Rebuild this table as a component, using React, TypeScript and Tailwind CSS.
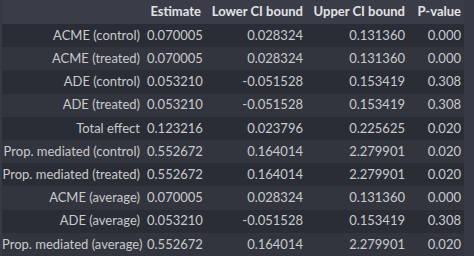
const columns = ['Estimate', 'Lower CI bound', 'Upper CI bound', 'P-value'];

const rows: [string, string, string, string, string][] = [
  ['ACME (control)', '0.070005', '0.028324', '0.131360', '0.000'],
  ['ACME (treated)', '0.070005', '0.028324', '0.131360', '0.000'],
  ['ADE (control)', '0.053210', '-0.051528', '0.153419', '0.308'],
  ['ADE (treated)', '0.053210', '-0.051528', '0.153419', '0.308'],
  ['Total effect', '0.123216', '0.023796', '0.225625', '0.020'],
  ['Prop. mediated (control)', '0.552672', '0.164014', '2.279901', '0.020'],
  ['Prop. mediated (treated)', '0.552672', '0.164014', '2.279901', '0.020'],
  ['ACME (average)', '0.070005', '0.028324', '0.131360', '0.000'],
  ['ADE (average)', '0.053210', '-0.051528', '0.153419', '0.308'],
  ['Prop. mediated (average)', '0.552672', '0.164014', '2.279901', '0.020'],
];

// column widths taken off the notebook output
const widths = ['w-[145px]', 'w-[61px]', 'w-[102px]', 'w-[102px]', 'w-[52px]'];
const pads = ['pr-[7px]', 'pr-[7px]', 'pr-[7px]', 'pr-[7px]', 'pr-[3px]'];

export default function App() {
  return (
    <div className="w-[474px] h-[256px] overflow-hidden bg-[#373a44] pl-[2px] font-['Lato',sans-serif] text-[13px]">
      <table className="table-fixed border-collapse w-[462px]">
        <thead>
          <tr className="h-[24px] bg-[#3a3d47] text-[#e2e3e6] font-bold">
            <th className={`${widths[0]} ${pads[0]}`} />
            {columns.map((c, i) => (
              <th key={c} className={`${widths[i + 1]} ${pads[i + 1]} text-right whitespace-nowrap`}>
                {c}
              </th>
            ))}
          </tr>
        </thead>
        <tbody className="text-[#c9cacd]">
          {rows.map((r, ri) => (
            <tr key={ri} className={`h-[23.2px] ${ri % 2 === 0 ? 'bg-[#2a2d36]' : 'bg-[#32353e]'}`}>
              {r.map((cell, ci) => (
                <td key={ci} className={`${pads[ci]} text-right whitespace-nowrap`}>
                  {cell}
                </td>
              ))}
            </tr>
          ))}
        </tbody>
      </table>
    </div>
  );
}
